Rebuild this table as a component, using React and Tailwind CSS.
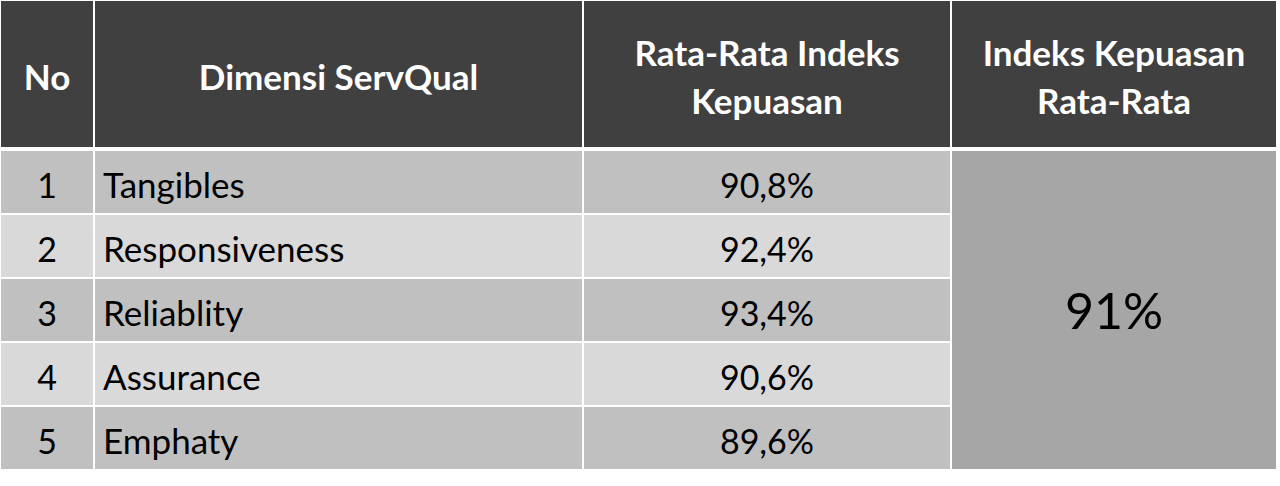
import React from 'react';

const rows = [
  { no: 1, name: 'Tangibles', value: '90,8%' },
  { no: 2, name: 'Responsiveness', value: '92,4%' },
  { no: 3, name: 'Reliablity', value: '93,4%' },
  { no: 4, name: 'Assurance', value: '90,6%' },
  { no: 5, name: 'Emphaty', value: '89,6%' },
];

export default function App() {
  return (
    <div className="w-[1280px] h-[486px] bg-white pt-px pl-px" style={{ fontFamily: 'Lato, "Open Sans", sans-serif' }}>
      <div className="grid grid-cols-[92px_487px_366px_324px] grid-rows-[148px_repeat(5,62px)] gap-[2px] w-max">
        {/* Header */}
        <div className="h-[146px] bg-[#404040] text-white font-bold text-[35px] pt-[4px] flex items-center justify-center">
          No
        </div>
        <div className="h-[146px] bg-[#404040] text-white font-bold text-[35px] pt-[4px] flex items-center justify-center">
          Dimensi ServQual
        </div>
        <div className="h-[146px] bg-[#404040] text-white font-bold text-[35px] leading-[48px] pt-[4px] flex items-center justify-center text-center">
          Rata-Rata Indeks<br />Kepuasan
        </div>
        <div className="h-[146px] bg-[#404040] text-white font-bold text-[35px] leading-[48px] pt-[4px] flex items-center justify-center text-center">
          Indeks Kepuasan<br />Rata-Rata
        </div>

        {rows.map((row, i) => {
          const bg = i % 2 === 0 ? 'bg-[#c0c0c0]' : 'bg-[#d9d9d9]';
          return (
            <React.Fragment key={row.no}>
              <div className={`${bg} text-black text-[34px] pt-[4px] flex items-center justify-center`}>{row.no}</div>
              <div className={`${bg} text-black text-[35px] pt-[4px] flex items-center pl-[8px]`}>{row.name}</div>
              <div className={`${bg} text-black text-[34px] pt-[4px] flex items-center justify-center`}>{row.value}</div>
              {i === 0 && (
                <div className="row-span-5 bg-[#a6a6a6] text-black text-[50px] flex items-center justify-center">
                  91%
                </div>
              )}
            </React.Fragment>
          );
        })}
      </div>
    </div>
  );
}
